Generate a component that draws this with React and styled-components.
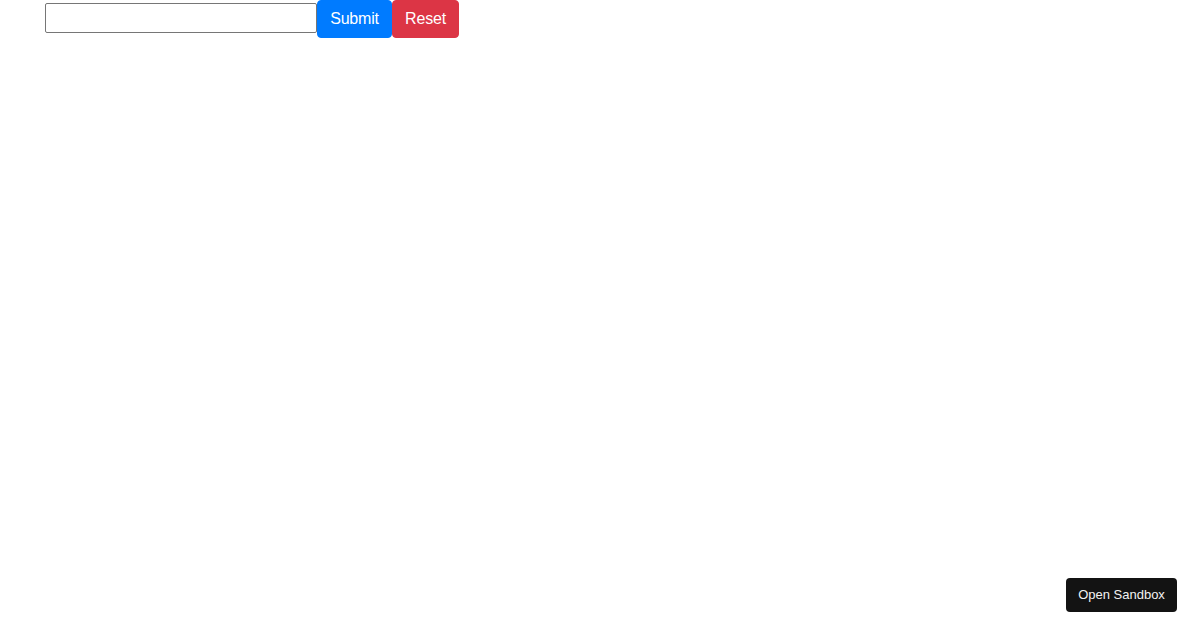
import React from "react";
import styled, { createGlobalStyle } from "styled-components";

const Global = createGlobalStyle`
  html, body { margin: 0; padding: 0; background: #fff; }
  body { font-family: "Liberation Sans", Arial, sans-serif; }
`;

const Form = styled.form`
  display: flex;
  align-items: flex-start;
  padding-left: 45px;
`;

const Input = styled.input`
  box-sizing: border-box;
  width: 272px;
  height: 30px;
  margin: 3px 0 0;
  border: 1px solid #767676;
  border-radius: 2px;
  padding: 1px 2px;
  font-size: 16px;
  font-family: "Liberation Sans", Arial, sans-serif;
`;

const Button = styled.button`
  box-sizing: border-box;
  width: ${(p) => p.$w}px;
  height: 38px;
  margin: 0;
  padding: 6px 0;
  border: 1px solid ${(p) => p.$bg};
  border-radius: 4px;
  background: ${(p) => p.$bg};
  color: #fff;
  font-family: "Liberation Sans", Arial, sans-serif;
  font-size: 16px;
  line-height: 24px;
  letter-spacing: -0.2px;
  text-align: center;
  cursor: pointer;
`;

const Sandbox = styled.a`
  position: fixed;
  right: 23px;
  bottom: 18px;
  box-sizing: border-box;
  width: 111px;
  height: 34px;
  padding-bottom: 2px;
  display: flex;
  align-items: center;
  justify-content: center;
  background: #131313;
  color: #f2f2f2;
  border-radius: 4px;
  font-family: "Liberation Sans", Arial, sans-serif;
  font-size: 13px;
  text-decoration: none;
`;

export default function App() {
  return (
    <>
      <Global />
      <Form onSubmit={(e) => e.preventDefault()}>
        <Input type="text" />
        <Button type="submit" $bg="#007bff" $w={75}>Submit</Button>
        <Button type="button" $bg="#dc3545" $w={67}>Reset</Button>
      </Form>
      <Sandbox href="#">Open Sandbox</Sandbox>
    </>
  );
}
